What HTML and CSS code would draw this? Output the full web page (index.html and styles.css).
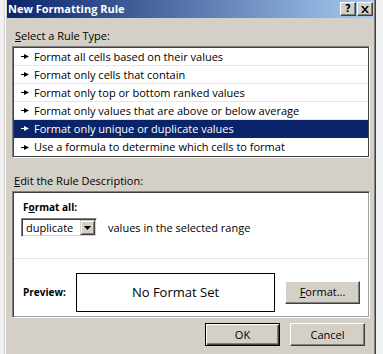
FILE: index.html
```html
<!DOCTYPE html>
<html>
<head>
<meta charset="utf-8">
<link rel="stylesheet" href="styles.css">
</head>
<body>
<div class="window">
  <div class="frame">
    <div class="titlebar">
      <span class="title">New Formatting Rule</span>
      <div class="caption-btns">
        <span class="cbtn help">?</span>
        <span class="cbtn close"><svg width="8" height="7" viewBox="0 0 8 7"><path d="M0 0h2l2 2.5L6 0h2L5 3.5 8 7H6L4 4.5 2 7H0l3-3.5z" fill="#000"/></svg></span>
      </div>
    </div>
    <div class="content">
      <div class="label"><u>S</u>elect a Rule Type:</div>
      <ul class="list">
        <li class="row"><svg class="arrow" width="8" height="5" viewBox="0 0 8 5"><path d="M0 2h4v1H0z M3 0l5 2.5L3 5z"/></svg>Format all cells based on their values</li>
        <li class="row"><svg class="arrow" width="8" height="5" viewBox="0 0 8 5"><path d="M0 2h4v1H0z M3 0l5 2.5L3 5z"/></svg>Format only cells that contain</li>
        <li class="row"><svg class="arrow" width="8" height="5" viewBox="0 0 8 5"><path d="M0 2h4v1H0z M3 0l5 2.5L3 5z"/></svg>Format only top or bottom ranked values</li>
        <li class="row"><svg class="arrow" width="8" height="5" viewBox="0 0 8 5"><path d="M0 2h4v1H0z M3 0l5 2.5L3 5z"/></svg>Format only values that are above or below average</li>
        <li class="row selected"><svg class="arrow" width="8" height="5" viewBox="0 0 8 5"><path d="M0 2h4v1H0z M3 0l5 2.5L3 5z"/></svg>Format only unique or duplicate values</li>
        <li class="row"><svg class="arrow" width="8" height="5" viewBox="0 0 8 5"><path d="M0 2h4v1H0z M3 0l5 2.5L3 5z"/></svg>Use a formula to determine which cells to format</li>
      </ul>
      <div class="label label-edit"><u>E</u>dit the Rule Description:</div>
      <div class="panel">
        <div class="panel-top">
          <div class="bold-label">F<u>o</u>rmat all:</div>
          <div class="combo-row">
            <div class="combo">
              <span class="combo-text">duplicate</span>
              <span class="drop"><svg width="7" height="4" viewBox="0 0 7 4"><path d="M0 0h7L3.5 4z" fill="#000"/></svg></span>
            </div>
            <span class="combo-after">values in the selected range</span>
          </div>
        </div>
        <div class="panel-bottom">
          <span class="bold-label preview-label">Preview:</span>
          <div class="preview">No Format Set</div>
          <button class="btn format-btn"><u>F</u>ormat...</button>
        </div>
      </div>
      <div class="actions">
        <button class="btn default">OK</button>
        <button class="btn">Cancel</button>
      </div>
    </div>
  </div>
</div>
</body>
</html>
```

FILE: styles.css
```css
html, body {
  margin: 0;
  padding: 0;
  height: 354px;
  overflow: hidden;
}
body {
  background: #eef0f2;
  font-family: "Open Sans", "Liberation Sans", sans-serif;
  font-size: 11px;
  color: #000;
}
.window {
  margin-left: 4px;
  width: 372px;
  height: 354px;
  box-sizing: border-box;
  background: #d4d0c8;
  border-left: 1px solid #d4d0c8;
  border-right: 1px solid #404040;
}
.frame {
  height: 100%;
  box-sizing: border-box;
  border-left: 1px solid #ffffff;
  border-right: 1px solid #808080;
  padding: 0 1px;
}
.titlebar {
  height: 18px;
  display: flex;
  align-items: center;
  justify-content: space-between;
  background: linear-gradient(to right, #0a246a, #a6caf0);
  padding-left: 1px;
}
.title {
  color: #fff;
  font-weight: 700;
  font-size: 11px;
  line-height: 14px;
}
.caption-btns {
  display: flex;
}
.cbtn {
  width: 16px;
  height: 14px;
  box-sizing: border-box;
  display: flex;
  align-items: center;
  justify-content: center;
  background: #d4d0c8;
  border: 1px solid;
  border-color: #ffffff #404040 #404040 #ffffff;
  box-shadow: inset -1px -1px 0 #808080;
}
.cbtn.help {
  font-family: "DejaVu Sans", sans-serif;
  font-weight: 700;
  font-size: 10px;
  line-height: 12px;
}
.cbtn.close {
  margin-left: 1px;
}
.content {
  display: flex;
  flex-direction: column;
}
.label {
  line-height: 14px;
  margin-top: 11px;
  padding-left: 8px;
}
.label-edit {
  margin-top: 16px;
  padding-left: 7px;
}
.list {
  list-style: none;
  margin: 3px 3px 0 5px;
  background: #fff;
  border: 1px solid;
  border-color: #808080 #ffffff #ffffff #808080;
  box-shadow: inset 1px 1px 0 #404040, inset -1px -1px 0 #404040;
  padding: 1px;
}
.row {
  height: 18px;
  box-sizing: border-box;
  border-bottom: 1px solid #e6e6e6;
  display: flex;
  align-items: center;
  line-height: 14px;
  padding-left: 7px;
  white-space: nowrap;
}
.row:last-child {
  border-bottom: none;
}
.row.selected {
  background: #0a246a;
  color: #fff;
  border-bottom-color: #0a246a;
}
.arrow {
  fill: #000;
  margin-right: 5px;
  flex: none;
}
.row.selected .arrow {
  fill: #fff;
}
.panel {
  margin: 3px 3px 0 5px;
  height: 127px;
  box-sizing: border-box;
  background: #fff;
  border: 1px solid;
  border-color: #808080 #ffffff #ffffff #808080;
  box-shadow: inset 1px 1px 0 #404040, inset -1px -1px 0 #a0a0a0;
  padding: 1px;
  display: flex;
  flex-direction: column;
}
.panel-top {
  height: 66px;
  box-sizing: border-box;
  padding: 7px 0 0 7px;
  border-bottom: 1px solid #e3e3e3;
}
.bold-label {
  font-weight: 700;
  font-size: 10px;
  line-height: 14px;
  padding-left: 2px;
}
.combo-row {
  display: flex;
  align-items: center;
  margin-top: 4px;
}
.combo {
  width: 76px;
  height: 19px;
  box-sizing: border-box;
  display: flex;
  align-items: center;
  justify-content: space-between;
  border: 1px solid;
  border-color: #808080 #ffffff #ffffff #808080;
  box-shadow: inset 1px 1px 0 #404040, inset -1px -1px 0 #d4d0c8;
  padding: 1px;
  background: #fff;
}
.combo-text {
  padding-left: 3px;
  line-height: 14px;
}
.drop {
  width: 15px;
  height: 15px;
  box-sizing: border-box;
  display: flex;
  align-items: center;
  justify-content: center;
  background: #d4d0c8;
  border: 1px solid;
  border-color: #d4d0c8 #404040 #404040 #d4d0c8;
  box-shadow: inset 1px 1px 0 #fff, inset -1px -1px 0 #808080;
}
.combo-after {
  margin-left: 11px;
  line-height: 14px;
}
.panel-bottom {
  flex: 1;
  display: flex;
  align-items: center;
  padding: 13px 0 4px 7px;
  box-sizing: border-box;
}
.preview-label {
  width: 53px;
  flex: none;
}
.preview {
  width: 199px;
  height: 39px;
  box-sizing: border-box;
  border: 1px solid #000;
  display: flex;
  align-items: center;
  justify-content: center;
  font-size: 13px;
}
.btn {
  width: 75px;
  height: 23px;
  box-sizing: border-box;
  background: #d4d0c8;
  border: 1px solid;
  border-color: #ffffff #404040 #404040 #ffffff;
  box-shadow: inset -1px -1px 0 #808080;
  font-family: "Open Sans", "Liberation Sans", sans-serif;
  font-size: 11px;
  color: #000;
  padding: 0;
  line-height: 14px;
}
.format-btn {
  margin-left: 10px;
}
.btn.default {
  border-color: #000;
  box-shadow: inset 1px 1px 0 #fff, inset -1px -1px 0 #404040, inset -2px -2px 0 #808080;
}
.actions {
  display: flex;
  justify-content: flex-end;
  gap: 10px;
  margin-top: 5px;
  margin-right: 8px;
}
```
